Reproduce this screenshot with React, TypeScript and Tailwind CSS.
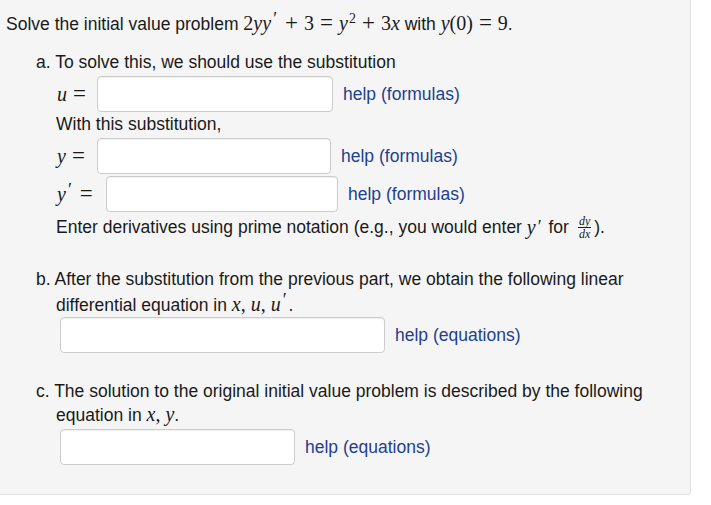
import React from "react";

const text = "font-['Liberation_Sans',Arial,sans-serif]";

function V({ children }: { children: React.ReactNode }) {
  return <span className="font-['Liberation_Serif',serif] italic text-[20px] leading-none">{children}</span>;
}

function N({ children }: { children: React.ReactNode }) {
  return <span className="font-['Liberation_Serif',serif] text-[20px] leading-none">{children}</span>;
}

function Op({ children }: { children: React.ReactNode }) {
  return <span className="font-['Liberation_Serif',serif] text-[23px] leading-none mx-[6px]">{children}</span>;
}

function Prime() {
  return (
    <span className="font-['Liberation_Serif',serif] text-[18px] leading-none align-[5px] ml-[2px] mr-[2px]">′</span>
  );
}

function AnswerBox({ width }: { width: string }) {
  return (
    <input
      type="text"
      className={`${width} h-[36px] bg-white border border-[#cccccc] rounded-[4px] shadow-[inset_0_1px_1px_rgba(0,0,0,0.06)] outline-none`}
    />
  );
}

function Help({ label }: { label: string }) {
  return <a className="text-[#1f3f8f] ml-[10px] cursor-pointer">help ({label})</a>;
}

export default function App() {
  return (
    <div className={`w-[711px] h-[505px] bg-white ${text} text-[17.5px] leading-[24px] text-[#1a1a1a]`}>
      <div className="w-[691px] h-[495px] bg-[#f5f5f5] border-r border-b border-[#e0e0e0] rounded-br-[4px] pl-[6px] pt-[10px]">
        <p className="h-[24px]">
          Solve the initial value problem <N>2</N>
          <V>yy</V>
          <Prime />
          <Op>+</Op>
          <N>3</N>
          <Op>=</Op>
          <V>y</V>
          <sup className="font-['Liberation_Serif',serif] text-[14px] leading-none ml-[1px]">2</sup>
          <Op>+</Op>
          <N>3</N>
          <V>x</V> with <V>y</V>
          <N>(0)</N>
          <Op>=</Op>
          <N>9</N>.
        </p>

        <div className="ml-[30px] mt-[16px]">
          <p className="h-[24px]">a. To solve this, we should use the substitution</p>
          <div className="ml-[21px]">
            <div className="flex items-center mt-[2px] h-[36px]">
              <span className="w-[40px]">
                <V>u</V>
                <Op>=</Op>
              </span>
              <AnswerBox width="w-[236px]" />
              <Help label="formulas" />
            </div>
            <p className="-ml-[1px] h-[24px]">With this substitution,</p>
            <div className="flex items-center mt-[2px] h-[36px]">
              <span className="w-[40px]">
                <V>y</V>
                <Op>=</Op>
              </span>
              <AnswerBox width="w-[234px]" />
              <Help label="formulas" />
            </div>
            <div className="flex items-center mt-[2px] h-[36px]">
              <span className="w-[49px]">
                <V>y</V>
                <Prime />
                <Op>=</Op>
              </span>
              <AnswerBox width="w-[232px]" />
              <Help label="formulas" />
            </div>
            <p className="-ml-[1px] mt-[3px] h-[24px] flex items-center">
              <span>Enter derivatives using prime notation (e.g., you would enter&nbsp;</span>
              <V>y</V>
              <Prime />
              <span>&nbsp;for</span>
              <span className="inline-flex flex-col items-center font-['Liberation_Serif',serif] italic text-[12px] leading-[12px] ml-[9px] mr-[3px]">
                <span className="border-b border-[#1a1a1a] px-[1px]">dy</span>
                <span className="px-[1px]">dx</span>
              </span>
              <span>).</span>
            </p>
          </div>

          <p className="mt-[28px] h-[24px]">
            b. After the substitution from the previous part, we obtain the following linear
          </p>
          <div className="ml-[20px]">
            <p className="h-[24px]">
              differential equation in <V>x</V>
              <N>,&nbsp;</N>
              <V>u</V>
              <N>,&nbsp;</N>
              <V>u</V>
              <Prime />.
            </p>
            <div className="flex items-center mt-[2px] ml-[4px] h-[36px]">
              <AnswerBox width="w-[325px]" />
              <Help label="equations" />
            </div>
          </div>

          <p className="mt-[26px] h-[24px]">
            c. The solution to the original initial value problem is described by the following
          </p>
          <div className="ml-[20px]">
            <p className="h-[24px]">
              equation in <V>x</V>
              <N>,&nbsp;</N>
              <V>y</V>.
            </p>
            <div className="flex items-center mt-[2px] ml-[4px] h-[36px]">
              <AnswerBox width="w-[235px]" />
              <Help label="equations" />
            </div>
          </div>
        </div>
      </div>
    </div>
  );
}
